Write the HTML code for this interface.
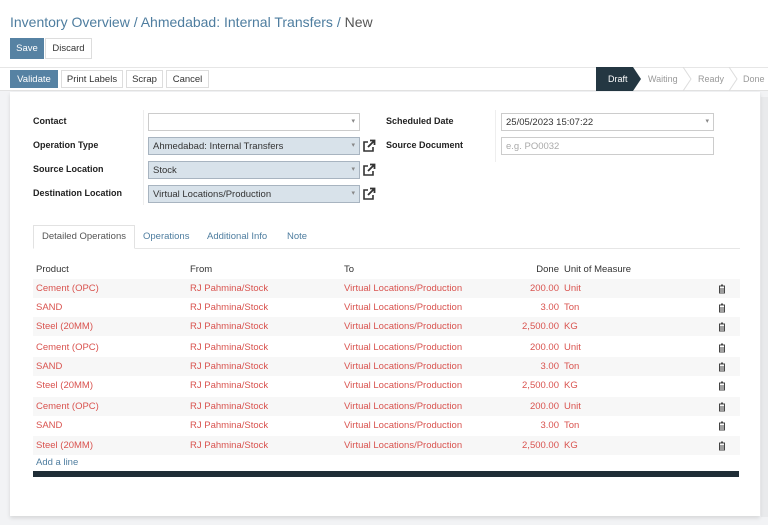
<!DOCTYPE html>
<html><head><style>
*{box-sizing:border-box;margin:0;padding:0}
body{width:768px;height:525px;overflow:hidden;background:#f2f3f5;font-family:"Liberation Sans",sans-serif;font-size:9.5px;color:#333;position:relative}
.a{position:absolute;white-space:nowrap}
.top{position:absolute;left:0;top:0;width:768px;height:68px;background:#fff}
.bar{position:absolute;left:0;top:67px;width:768px;height:24px;background:#fff;border-top:1px solid #e6e6e6;border-bottom:1px solid #e2e2e2}
.btn{position:absolute;height:21px;display:flex;align-items:center;justify-content:center;font-size:9.5px;border:1px solid #ddd;background:#fff;color:#333}
.pri{background:#5682a3;color:#fff;border-color:#5682a3}
.card{position:absolute;left:10px;top:92px;width:750px;height:424px;background:#fff;box-shadow:0 2px 4px rgba(0,0,0,.12)}
.lbl{font-weight:bold;color:#222;font-size:9px}
.inp{position:absolute;height:18px;border:1px solid #ccc;background:#fff;font-size:9.5px;display:flex;align-items:center;padding-left:4px}
.sel{background:#d8e2ea;border-color:#a8b4c0}
.car{position:absolute;right:4px;top:3px;color:#888;font-size:7px}
.row{position:absolute;left:33px;width:707px;height:19px;font-size:9.5px;color:#d9534f;line-height:19px}
.row span{position:absolute}
.st{background:#f7f7f7}
</style></head><body>
<div class="top"></div>
<div class="a" style="left:10px;top:14px;font-size:14px;color:#4e7d9f">Inventory Overview / Ahmedabad: Internal Transfers / <span style="color:#555">New</span></div>
<div class="btn pri" style="left:10px;top:38px;width:34px">Save</div>
<div class="btn" style="left:45px;top:38px;width:47px">Discard</div>
<div class="bar"></div>
<div class="btn pri" style="left:10px;top:70px;width:48px;height:18px">Validate</div>
<div class="btn" style="left:61px;top:70px;width:62px;height:18px">Print Labels</div>
<div class="btn" style="left:126px;top:70px;width:37px;height:18px">Scrap</div>
<div class="btn" style="left:166px;top:70px;width:43px;height:18px">Cancel</div>
<svg class="a" style="left:596px;top:67px" width="172" height="24">
<polygon points="0,0 37,0 45,12 37,24 0,24" fill="#243742"/>
<text x="12" y="15" fill="#fff" font-size="9" font-family="Liberation Sans">Draft</text>
<text x="52" y="15" fill="#999" font-size="9" font-family="Liberation Sans">Waiting</text>
<polyline points="87,0 95,12 87,24" fill="none" stroke="#ddd"/>
<text x="102" y="15" fill="#999" font-size="9" font-family="Liberation Sans">Ready</text>
<polyline points="133,0 141,12 133,24" fill="none" stroke="#ddd"/>
<text x="147" y="15" fill="#999" font-size="9" font-family="Liberation Sans">Done</text>
</svg>
<div class="a" style="left:761px;top:97px;width:7px;height:420px;background:#e9eaec"></div>
<div class="card"></div>
<div class="a" style="left:143px;top:110px;width:1px;height:95px;background:#eee"></div>
<div class="a" style="left:495px;top:110px;width:1px;height:52px;background:#eee"></div>
<div class="a lbl" style="left:33px;top:116px">Contact</div>
<div class="a lbl" style="left:33px;top:140px">Operation Type</div>
<div class="a lbl" style="left:33px;top:164px">Source Location</div>
<div class="a lbl" style="left:33px;top:188px">Destination Location</div>
<div class="inp" style="left:148px;top:113px;width:212px"><span class="car">▾</span></div>
<div class="inp sel" style="left:148px;top:137px;width:212px">Ahmedabad: Internal Transfers<span class="car">▾</span></div>
<div class="inp sel" style="left:148px;top:161px;width:212px">Stock<span class="car">▾</span></div>
<div class="inp sel" style="left:148px;top:185px;width:212px">Virtual Locations/Production<span class="car">▾</span></div>
<svg class="a" style="left:362px;top:139px" width="14" height="14"><path d="M6 3H2v9h9V8" fill="none" stroke="#333" stroke-width="1.6"/><path d="M6 8l6-6M8 1.5h4.5V6" fill="none" stroke="#333" stroke-width="1.8"/></svg>
<svg class="a" style="left:362px;top:163px" width="14" height="14"><path d="M6 3H2v9h9V8" fill="none" stroke="#333" stroke-width="1.6"/><path d="M6 8l6-6M8 1.5h4.5V6" fill="none" stroke="#333" stroke-width="1.8"/></svg>
<svg class="a" style="left:362px;top:187px" width="14" height="14"><path d="M6 3H2v9h9V8" fill="none" stroke="#333" stroke-width="1.6"/><path d="M6 8l6-6M8 1.5h4.5V6" fill="none" stroke="#333" stroke-width="1.8"/></svg>
<div class="a lbl" style="left:386px;top:116px">Scheduled Date</div>
<div class="a lbl" style="left:386px;top:140px">Source Document</div>
<div class="inp" style="left:501px;top:113px;width:213px">25/05/2023 15:07:22<span class="car">▾</span></div>
<div class="inp" style="left:501px;top:137px;width:213px;color:#aaa">e.g. PO0032</div>
<div class="a" style="left:33px;top:248px;width:707px;height:1px;background:#e6e6e6"></div>
<div class="a" style="left:33px;top:225px;width:102px;height:24px;border:1px solid #e2e2e2;border-bottom-color:#fff;background:#fff;text-align:center;line-height:22px;color:#555">Detailed Operations</div>
<div class="a" style="left:143px;top:231px;color:#4e7d9f">Operations</div>
<div class="a" style="left:207px;top:231px;color:#4e7d9f">Additional Info</div>
<div class="a" style="left:287px;top:231px;color:#4e7d9f">Note</div>
<div class="row" style="top:260px;color:#333"><span style="left:3px">Product</span><span style="left:157px">From</span><span style="left:311px">To</span><span style="right:181px">Done</span><span style="left:531px">Unit of Measure</span></div>
<div id="rows"></div>
<div class="a" style="left:36px;top:457px;color:#4e7d9f">Add a line</div>
<div class="a" style="left:33px;top:471px;width:706px;height:6px;background:#1f2d36"></div>
<script>
var d=[["Cement (OPC)","200.00","Unit"],["SAND","3.00","Ton"],["Steel (20MM)","2,500.00","KG"]];
var tops=[279,298,317,338,357,376,397,416,436],h="";
for(var i=0;i<9;i++){var r=d[i%3];
h+='<div class="row'+(i%2==0?' st':'')+'" style="top:'+tops[i]+'px"><span style="left:3px">'+r[0]+'</span><span style="left:157px">RJ Pahmina/Stock</span><span style="left:311px">Virtual Locations/Production</span><span style="right:181px">'+r[1]+'</span><span style="left:531px">'+r[2]+'</span><svg style="position:absolute;left:685px;top:5px" width="8" height="10"><path d="M1 2h6M3 1h2M1.5 2.5v6.5h5V2.5M3 4v4M5 4v4" fill="none" stroke="#444" stroke-width="1"/></svg></div>';}
document.getElementById("rows").innerHTML=h;
</script>
</body></html>
